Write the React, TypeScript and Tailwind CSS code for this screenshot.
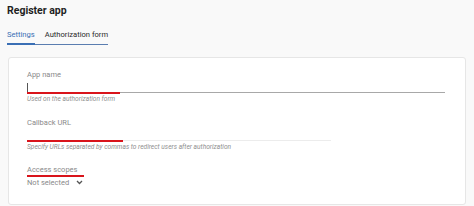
export default function App() {
  return (
    <div className="w-[474px] h-[206px] bg-[#f9f9f9] overflow-hidden font-['Roboto',sans-serif] flex flex-col">
      <div className="pl-[7px] pt-[4px] text-[10.5px] font-bold leading-[14px] text-[#1f1f1f]">Register app</div>
      <div className="flex ml-[7px] mt-[12px] w-[101px] whitespace-nowrap border-b border-[#5a7db0] text-[7.6px] leading-[10px]">
        <div className="pb-[3px] border-b-2 border-[#3a6fb5] -mb-[1px] text-[#3a6fb5]">Settings</div>
        <div className="pl-[10px] pb-[3px] text-[#2a2a2a]">Authorization form</div>
      </div>
      <div className="mx-[8px] mt-[12px] h-[148px] bg-white border border-[#e6e6e6] rounded-[3px] pl-[18px] pr-[20px] pt-[12px] flex flex-col">
        <div className="text-[7.5px] leading-[10px] text-[#8a8a8a]">App name</div>
        <div className="relative h-[13px] border-b border-[#a8a8a8]">
          <div className="absolute left-0 top-[3px] h-[9px] w-px bg-[#555]" />
          <div className="absolute left-0 -bottom-[1.5px] h-[2px] w-[93px] bg-[#d9141b]" />
        </div>
        <div className="mt-[2px] text-[6.6px] italic leading-[9px] text-[#8f8f8f]">Used on the authorization form</div>
        <div className="mt-[14px] text-[7.5px] leading-[10px] text-[#8a8a8a]">Callback URL</div>
        <div className="relative h-[13px] w-[304px] border-b border-[#ececec]">
          <div className="absolute left-0 -bottom-[1.5px] h-[2px] w-[96px] bg-[#d9141b]" />
        </div>
        <div className="mt-[2px] text-[6.6px] italic leading-[9px] text-[#8f8f8f]">Specify URLs separated by commas to redirect users after authorization</div>
        <div className="relative mt-[13px] self-start text-[7.5px] leading-[10px] text-[#8a8a8a]">
          Access scopes
          <div className="absolute left-0 top-[10px] h-[2px] w-[57px] bg-[#d9141b]" />
        </div>
        <div className="mt-[2px] flex items-center gap-[7px] text-[7.5px] leading-[11px] text-[#8a8a8a]">
          <span>Not selected</span>
          <svg width="7" height="5" viewBox="0 0 7 5">
            <path d="M1 1l2.5 2.5L6 1" fill="none" stroke="#555" strokeWidth="1.3" />
          </svg>
        </div>
      </div>
    </div>
  );
}
